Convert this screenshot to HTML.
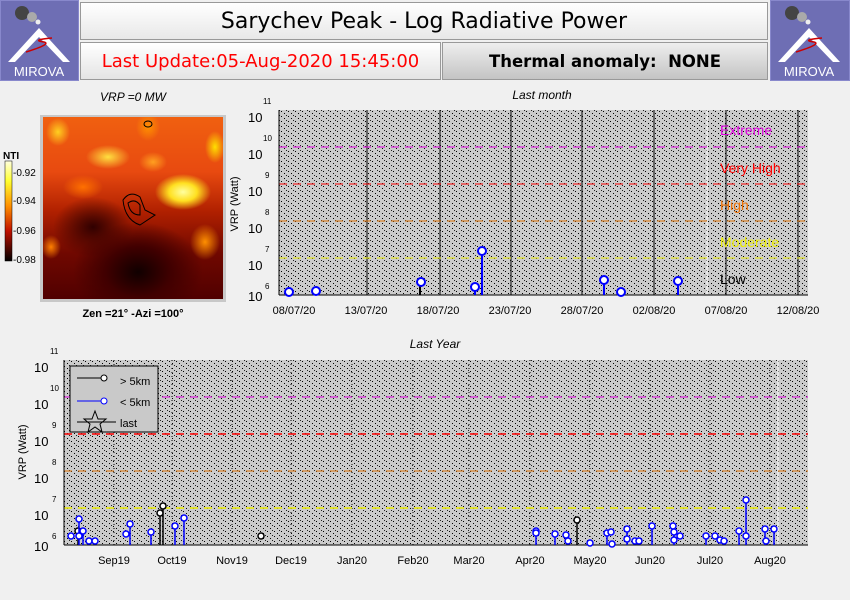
<!DOCTYPE html>
<html><head><meta charset="utf-8"><style>
body{margin:0;width:850px;height:600px;background:#f0f0f0;font-family:"Liberation Sans",sans-serif;position:relative;overflow:hidden}
.box{position:absolute;border:1px solid #999;box-sizing:border-box;text-align:center}
.heat{position:absolute;left:43px;top:117px;width:180px;height:182px;
background:
radial-gradient(ellipse 28px 18px at 140px 75px,#ffffa0 0%,#ffe020 50%,rgba(255,160,0,0) 100%),
radial-gradient(ellipse 22px 12px at 65px 40px,#ffe040 0%,rgba(255,150,0,0) 100%),
radial-gradient(ellipse 12px 14px at 15px 15px,#ffd020 0%,rgba(255,150,0,0) 100%),
radial-gradient(ellipse 10px 16px at 172px 30px,#ffe000 0%,rgba(255,150,0,0) 100%),
radial-gradient(ellipse 12px 14px at 105px 10px,#ff9000 0%,rgba(255,150,0,0) 100%),
radial-gradient(ellipse 14px 10px at 110px 45px,#ffa020 0%,rgba(255,150,0,0) 100%),
radial-gradient(ellipse 15px 18px at 162px 125px,#ff9000 0%,rgba(255,120,0,0) 100%),
radial-gradient(ellipse 10px 12px at 8px 130px,#ff8000 0%,rgba(255,120,0,0) 100%),
radial-gradient(ellipse 20px 12px at 40px 70px,#ff7000 0%,rgba(255,120,0,0) 100%),
radial-gradient(ellipse 65px 50px at 95px 155px,#100000 0%,#400000 50%,rgba(120,0,0,0) 100%),
radial-gradient(ellipse 40px 30px at 50px 110px,#300000 0%,rgba(120,0,0,0) 100%),
linear-gradient(180deg,#f06010 0%,#e84a10 30%,#b02000 52%,#700800 75%,#500000 100%);}
</style></head><body>
<div class="box" style="left:0;top:0;width:79px;height:81px;background:#6e6eb4;border-color:#8888cc"></div>
<div class="box" style="left:770px;top:0;width:80px;height:81px;background:#6e6eb4;border-color:#8888cc"></div>
<svg style="position:absolute;left:0;top:0" width="850" height="81">
<g id="lg"><circle cx="22" cy="13" r="7" fill="#444"/><circle cx="32" cy="17" r="5" fill="#aaa"/><circle cx="38" cy="22" r="2.5" fill="#eee"/>
<polygon points="39,28 70,62 63,62 39,37 15,62 8,62" fill="#fff"/><path d="M26 52 Q52 44 44 42 Q30 40 52 38" fill="none" stroke="#c00" stroke-width="1.5"/>
<text x="39" y="76" font-size="13" fill="#fff" text-anchor="middle" font-family="Liberation Sans">MIROVA</text></g>
<use href="#lg" x="770"/>
</svg>
<div class="box" style="left:80px;top:2px;width:688px;height:38px;background:linear-gradient(#fff,#e8e8e8);font-size:22px;line-height:38px;font-family:'DejaVu Sans',sans-serif">Sarychev Peak - Log Radiative Power</div>
<div class="box" style="left:80px;top:42px;width:361px;height:38px;background:linear-gradient(#fff,#e4e4e4);font-size:18px;line-height:38px;color:#f00;font-family:'DejaVu Sans',sans-serif">Last Update:05-Aug-2020 15:45:00</div>
<div class="box" style="left:442px;top:42px;width:326px;height:38px;background:linear-gradient(#eee,#c4c4c4);font-size:16.5px;line-height:38px;font-weight:bold;font-family:'DejaVu Sans',sans-serif">Thermal anomaly:&nbsp; NONE</div>
<div style="position:absolute;left:40px;top:115px;width:186px;height:187px;background:#c8c8c8"></div>
<div class="heat"></div>
<svg style="position:absolute;left:0;top:0" width="850" height="600" font-family="Liberation Sans">
<defs>
<pattern id="dt" width="7" height="5" patternUnits="userSpaceOnUse"><rect width="7" height="5" fill="#cbcbcb"/><rect x="1" y="1" width="1" height="1" fill="#000"/><rect x="4" y="3" width="1" height="1" fill="#000"/><rect x="6" y="0" width="1" height="1" fill="#222"/></pattern>
<linearGradient id="cb" x1="0" y1="0" x2="0" y2="1"><stop offset="0" stop-color="#ffffe0"/><stop offset=".2" stop-color="#ffff30"/><stop offset=".45" stop-color="#ff9000"/><stop offset=".7" stop-color="#c01000"/><stop offset="1" stop-color="#000"/></linearGradient>
</defs>
<text x="133" y="101" font-size="12" font-style="italic" text-anchor="middle">VRP =0 MW</text>
<path d="M123 200 Q130 190 140 197 L145 210 L155 215 L140 225 Q125 220 123 200Z" fill="none" stroke="#000" stroke-width="1"/>
<path d="M128 203 Q135 198 140 205 L140 215 Q130 215 128 203Z" fill="none" stroke="#000" stroke-width="1"/>
<ellipse cx="148" cy="124" rx="4" ry="3" fill="none" stroke="#000"/>
<text x="133" y="317" font-size="11" font-weight="bold" text-anchor="middle">Zen =21° -Azi =100°</text>
<text x="3" y="159" font-size="10" font-weight="bold">NTI</text>
<rect x="5" y="161" width="7" height="100" fill="url(#cb)" stroke="#000" stroke-width=".5"/>
<g font-size="10"><text x="13" y="176">-0.92</text><text x="13" y="204">-0.94</text><text x="13" y="234">-0.96</text><text x="13" y="263">-0.98</text></g>

<text x="542" y="99" font-size="12" font-style="italic" text-anchor="middle">Last month</text>
<rect x="279" y="110" width="529" height="185" fill="url(#dt)"/>
<g stroke="#000" stroke-width="1"><line x1="367" y1="110" x2="367" y2="295"/><line x1="440" y1="110" x2="440" y2="295"/><line x1="511" y1="110" x2="511" y2="295"/><line x1="582" y1="110" x2="582" y2="295"/><line x1="654" y1="110" x2="654" y2="295"/><line x1="726" y1="110" x2="726" y2="295"/><line x1="798" y1="110" x2="798" y2="295"/></g>
<line x1="707" y1="110" x2="707" y2="295" stroke="#fff"/>
<g stroke-width="1" stroke-dasharray="8,6"><line x1="279" y1="147" x2="808" y2="147" stroke="#e000e0"/><line x1="279" y1="184" x2="808" y2="184" stroke="#f00"/><line x1="279" y1="221" x2="808" y2="221" stroke="#e07000"/><line x1="279" y1="258" x2="808" y2="258" stroke="#ee0"/></g>
<line x1="279" y1="295" x2="808" y2="295" stroke="#000"/><line x1="279" y1="110" x2="279" y2="295" stroke="#000"/>
<g font-size="14"><text x="720" y="135" fill="#e000e0">Extreme</text><text x="720" y="173" fill="#f00">Very High</text><text x="720" y="210" fill="#f07000">High</text><text x="720" y="247" fill="#ee0">Moderate</text><text x="720" y="284" fill="#000">Low</text></g>
<g font-size="13"><text x="248" y="122">10</text><text x="248" y="159">10</text><text x="248" y="196">10</text><text x="248" y="233">10</text><text x="248" y="270">10</text><text x="248" y="301">10</text></g>
<g font-size="8"><text x="263" y="104">11</text><text x="263" y="141">10</text><text x="265" y="178">9</text><text x="265" y="215">8</text><text x="265" y="252">7</text><text x="265" y="289">6</text></g>
<text transform="translate(238 204) rotate(-90)" font-size="11" text-anchor="middle">VRP (Watt)</text>
<g font-size="11" text-anchor="middle"><text x="294" y="314">08/07/20</text><text x="366" y="314">13/07/20</text><text x="438" y="314">18/07/20</text><text x="510" y="314">23/07/20</text><text x="582" y="314">28/07/20</text><text x="654" y="314">02/08/20</text><text x="726" y="314">07/08/20</text><text x="798" y="314">12/08/20</text></g>
<g stroke="#00f" stroke-width="2" fill="#fff"><line x1="420" y1="295" x2="420" y2="282" stroke="#000"/><line x1="475" y1="295" x2="475" y2="287"/><line x1="482" y1="295" x2="482" y2="251"/><line x1="604" y1="295" x2="604" y2="280"/><line x1="678" y1="295" x2="678" y2="281"/>
<circle cx="289" cy="292" r="4"/><circle cx="316" cy="291" r="4"/><circle cx="421" cy="282" r="4"/><circle cx="475" cy="287" r="4"/><circle cx="482" cy="251" r="4"/><circle cx="604" cy="280" r="4"/><circle cx="621" cy="292" r="4"/><circle cx="678" cy="281" r="4"/></g>

<text x="435" y="348" font-size="12" font-style="italic" text-anchor="middle">Last Year</text>
<rect x="64" y="360" width="744" height="185" fill="url(#dt)"/>
<g stroke="#000" stroke-dasharray="1,3"><line x1="114" y1="360" x2="114" y2="545"/><line x1="172" y1="360" x2="172" y2="545"/><line x1="232" y1="360" x2="232" y2="545"/><line x1="291" y1="360" x2="291" y2="545"/><line x1="352" y1="360" x2="352" y2="545"/><line x1="413" y1="360" x2="413" y2="545"/><line x1="469" y1="360" x2="469" y2="545"/><line x1="530" y1="360" x2="530" y2="545"/><line x1="590" y1="360" x2="590" y2="545"/><line x1="650" y1="360" x2="650" y2="545"/><line x1="710" y1="360" x2="710" y2="545"/><line x1="770" y1="360" x2="770" y2="545"/></g>
<line x1="778" y1="360" x2="778" y2="545" stroke="#fff"/>
<g stroke-width="1" stroke-dasharray="8,6"><line x1="64" y1="397" x2="808" y2="397" stroke="#e000e0"/><line x1="64" y1="434" x2="808" y2="434" stroke="#f00" stroke-width="1.5"/><line x1="64" y1="471" x2="808" y2="471" stroke="#e07000"/><line x1="64" y1="508" x2="808" y2="508" stroke="#ee0" stroke-width="1.5"/></g>
<line x1="64" y1="545" x2="808" y2="545" stroke="#000"/><line x1="64" y1="360" x2="64" y2="545" stroke="#000"/>
<g font-size="13"><text x="34" y="372">10</text><text x="34" y="409">10</text><text x="34" y="446">10</text><text x="34" y="483">10</text><text x="34" y="520">10</text><text x="34" y="551">10</text></g>
<g font-size="8"><text x="50" y="354">11</text><text x="50" y="391">10</text><text x="52" y="428">9</text><text x="52" y="465">8</text><text x="52" y="502">7</text><text x="52" y="539">6</text></g>
<text transform="translate(26 452) rotate(-90)" font-size="11" text-anchor="middle">VRP (Watt)</text>
<g font-size="11" text-anchor="middle"><text x="114" y="564">Sep19</text><text x="172" y="564">Oct19</text><text x="232" y="564">Nov19</text><text x="291" y="564">Dec19</text><text x="352" y="564">Jan20</text><text x="413" y="564">Feb20</text><text x="469" y="564">Mar20</text><text x="530" y="564">Apr20</text><text x="590" y="564">May20</text><text x="650" y="564">Jun20</text><text x="710" y="564">Jul20</text><text x="770" y="564">Aug20</text></g>
<rect x="70" y="366" width="88" height="66" fill="#c9c9c9" stroke="#000"/>
<line x1="77" y1="378" x2="104" y2="378" stroke="#000"/><circle cx="104" cy="378" r="3" fill="#fff" stroke="#000"/>
<line x1="77" y1="401" x2="104" y2="401" stroke="#00f"/><circle cx="104" cy="401" r="3" fill="#fff" stroke="#00f"/>
<line x1="77" y1="422" x2="116" y2="422" stroke="#000"/><path d="M95 411 L98 419 L106 419 L100 424 L102 432 L95 427 L88 432 L90 424 L84 419 L92 419Z" fill="none" stroke="#000"/>
<g font-size="11"><text x="120" y="385">&gt; 5km</text><text x="120" y="406">&lt; 5km</text><text x="120" y="427">last</text></g>
<g stroke="#00f" stroke-width="1.5" fill="#fff">
<g stroke="#000"><line x1="78" y1="545" x2="78" y2="531"/><line x1="160" y1="545" x2="160" y2="513"/><line x1="163" y1="545" x2="163" y2="506"/><line x1="577" y1="545" x2="577" y2="520"/><circle cx="78" cy="531" r="3"/><circle cx="160" cy="513" r="3"/><circle cx="163" cy="506" r="3"/><circle cx="261" cy="536" r="3"/><circle cx="577" cy="520" r="3"/></g>
<line x1="79" y1="545" x2="79" y2="519"/><line x1="83" y1="545" x2="83" y2="531"/><line x1="130" y1="545" x2="130" y2="521"/><line x1="151" y1="545" x2="151" y2="532"/><line x1="175" y1="545" x2="175" y2="526"/><line x1="184" y1="545" x2="184" y2="518"/>
<line x1="536" y1="545" x2="536" y2="531"/><line x1="555" y1="545" x2="555" y2="534"/><line x1="607" y1="545" x2="607" y2="533"/><line x1="627" y1="545" x2="627" y2="529"/><line x1="652" y1="545" x2="652" y2="526"/><line x1="674" y1="545" x2="674" y2="526"/><line x1="706" y1="545" x2="706" y2="536"/><line x1="739" y1="545" x2="739" y2="531"/><line x1="746" y1="545" x2="746" y2="500"/><line x1="765" y1="545" x2="765" y2="529"/><line x1="774" y1="545" x2="774" y2="529"/>
<circle cx="71" cy="536" r="3"/><circle cx="79" cy="519" r="3"/><circle cx="79" cy="536" r="3"/><circle cx="83" cy="531" r="3"/><circle cx="89" cy="541" r="3"/><circle cx="95" cy="541" r="3"/><circle cx="126" cy="534" r="3"/><circle cx="130" cy="524" r="3"/><circle cx="151" cy="532" r="3"/><circle cx="175" cy="526" r="3"/><circle cx="184" cy="518" r="3"/>
<circle cx="536" cy="531" r="3"/><circle cx="536" cy="533" r="3"/><circle cx="555" cy="534" r="3"/><circle cx="566" cy="535" r="3"/><circle cx="568" cy="541" r="3"/><circle cx="590" cy="543" r="3"/><circle cx="607" cy="533" r="3"/><circle cx="611" cy="532" r="3"/><circle cx="612" cy="544" r="3"/><circle cx="627" cy="529" r="3"/><circle cx="627" cy="539" r="3"/><circle cx="635" cy="541" r="3"/><circle cx="639" cy="541" r="3"/><circle cx="652" cy="526" r="3"/><circle cx="673" cy="526" r="3"/><circle cx="674" cy="532" r="3"/><circle cx="674" cy="540" r="3"/><circle cx="680" cy="536" r="3"/><circle cx="706" cy="536" r="3"/><circle cx="715" cy="536" r="3"/><circle cx="720" cy="540" r="3"/><circle cx="724" cy="541" r="3"/><circle cx="739" cy="531" r="3"/><circle cx="746" cy="500" r="3"/><circle cx="746" cy="536" r="3"/><circle cx="765" cy="529" r="3"/><circle cx="766" cy="541" r="3"/><circle cx="774" cy="529" r="3"/></g>
</svg>
</body></html>
